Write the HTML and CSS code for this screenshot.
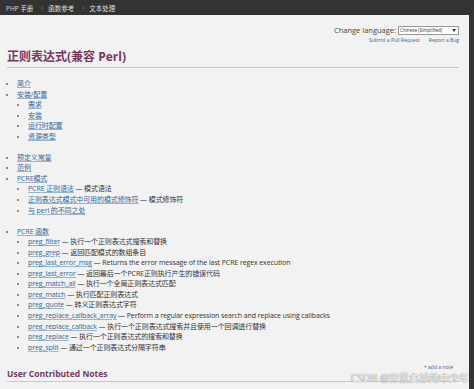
FILE: index.html
```html
<!DOCTYPE html>
<html lang="zh-CN">
<head>
<meta charset="utf-8">
<title>正则表达式(兼容 Perl)</title>
<link rel="stylesheet" href="styles.css">
</head>
<body>
<div class="topbar">
  <span class="crumb">PHP 手册</span>
  <span class="sep">›</span>
  <span class="crumb">函数参考</span>
  <span class="sep">›</span>
  <span class="crumb">文本处理</span>
</div>
<div class="main">
  <div class="content">
    <div class="langbar">
      <div class="langrow">
        <span class="langlabel">Change language:</span>
        <span class="select">Chinese (Simplified)<span class="arrow"></span></span>
      </div>
      <div class="editrow">
        <a href="#">Submit a Pull Request</a>
        <a href="#">Report a Bug</a>
      </div>
    </div>
    <h1 class="title">正则表达式(兼容 Perl)</h1>
    <ul class="chunklist">
      <li><a href="#">简介</a></li>
      <li><a href="#">安装/配置</a>
        <ul class="sub">
          <li><a href="#">需求</a></li>
          <li><a href="#">安装</a></li>
          <li><a href="#">运行时配置</a></li>
          <li><a href="#">资源类型</a></li>
        </ul>
      </li>
      <li><a href="#">预定义常量</a></li>
      <li><a href="#">范例</a></li>
      <li><a href="#">PCRE模式</a>
        <ul class="sub">
          <li><a href="#">PCRE 正则语法</a> — 模式语法</li>
          <li><a href="#">正则表达式模式中可用的模式修饰符</a> — 模式修饰符</li>
          <li><a href="#">与 perl 的不同之处</a></li>
        </ul>
      </li>
      <li><a href="#">PCRE 函数</a>
        <ul class="sub">
          <li><a href="#">preg_filter</a> — 执行一个正则表达式搜索和替换</li>
          <li><a href="#">preg_grep</a> — 返回匹配模式的数组条目</li>
          <li><a href="#">preg_last_error_msg</a> — Returns the error message of the last PCRE regex execution</li>
          <li><a href="#">preg_last_error</a> — 返回最后一个PCRE正则执行产生的错误代码</li>
          <li><a href="#">preg_match_all</a> — 执行一个全局正则表达式匹配</li>
          <li><a href="#">preg_match</a> — 执行匹配正则表达式</li>
          <li><a href="#">preg_quote</a> — 转义正则表达式字符</li>
          <li><a href="#">preg_replace_callback_array</a> — Perform a regular expression search and replace using callbacks</li>
          <li><a href="#">preg_replace_callback</a> — 执行一个正则表达式搜索并且使用一个回调进行替换</li>
          <li><a href="#">preg_replace</a> — 执行一个正则表达式的搜索和替换</li>
          <li><a href="#">preg_split</a> — 通过一个正则表达式分隔字符串</li>
        </ul>
      </li>
    </ul>
    <div class="notes">
      <div class="addnote"><a href="#">+ add a note</a></div>
      <h3 class="notes-title">User Contributed Notes</h3>
    </div>
    <div class="watermark">CSDN @穿素白衫的中少年</div>
  </div>
  <div class="rightbar"></div>
</div>
</body>
</html>
```
FILE: styles.css
```css
html, body {
  margin: 0;
  padding: 0;
  height: 389px;
  overflow: hidden;
  background: #f2f2f2;
  font-family: "Open Sans", "Noto Sans CJK SC", sans-serif;
  color: #333;
}
.topbar {
  height: 15px;
  background: #333;
  display: flex;
  align-items: center;
  gap: 5px;
  padding-left: 6px;
  font-size: 6.5px;
  color: #ddd;
}
.topbar .sep {
  color: #999;
  margin-left: 3px;
}
.main {
  display: flex;
  height: 374px;
}
.content {
  position: relative;
  flex: 1;
  background: #f2f2f2;
  padding: 0 10px 0 7px;
}
.rightbar {
  width: 5px;
  background: #333;
}
.langbar {
  display: flex;
  flex-direction: column;
  align-items: flex-end;
  padding-top: 10px;
}
.langrow {
  display: flex;
  align-items: center;
  gap: 2px;
  height: 10px;
}
.langlabel {
  font-size: 7.5px;
  color: #444;
}
.select {
  position: relative;
  display: flex;
  align-items: center;
  width: 58px;
  height: 7px;
  border: 1px solid #999;
  background: #fff;
  font-size: 4.6px;
  color: #333;
  padding-left: 1px;
  white-space: nowrap;
  box-sizing: content-box;
}
.select .arrow {
  position: absolute;
  right: 2px;
  top: 2px;
  width: 0;
  height: 0;
  border-left: 2px solid transparent;
  border-right: 2px solid transparent;
  border-top: 3px solid #333;
}
.editrow {
  display: flex;
  gap: 9px;
  margin-top: 1px;
  font-size: 5px;
  line-height: 8px;
}
.editrow a {
  color: #369;
  text-decoration: none;
}
.title {
  margin: 5px 0 0;
  font-size: 12px;
  line-height: 16px;
  font-weight: 700;
  color: #793862;
  padding-bottom: 2px;
  border-bottom: 1px solid #c8c8c8;
}
.chunklist, .sub {
  list-style: disc;
  margin: 0;
  font-size: 7px;
  line-height: 10.55px;
  letter-spacing: -0.1px;
}
.chunklist {
  padding-left: 10px;
  margin-top: 11px;
}
.sub {
  padding-left: 11px;
  margin-bottom: 10.55px;
}
li::marker {
  color: #666;
  font-size: 6px;
}
a {
  color: #369;
  text-decoration: underline;
  text-decoration-color: #9bb3cc;
  text-underline-offset: 1px;
}
.notes {
  display: flex;
  flex-direction: column;
  border-bottom: 1px solid #c8c8c8;
  margin-top: 4px;
}
.addnote {
  align-self: flex-end;
  font-size: 5px;
  line-height: 6px;
  margin-right: 6px;
}
.addnote a {
  text-decoration: none;
}
.notes-title {
  margin: -2px 0 0;
  font-size: 8.5px;
  line-height: 12px;
  font-weight: 700;
  color: #793862;
  padding-bottom: 1px;
}
.watermark {
  position: absolute;
  right: 0;
  bottom: 4px;
  font-size: 10px;
  color: rgba(255, 255, 255, 0.9);
  text-shadow: 0 0 1px #888, 0 0 1px #888;
  white-space: nowrap;
}
```
